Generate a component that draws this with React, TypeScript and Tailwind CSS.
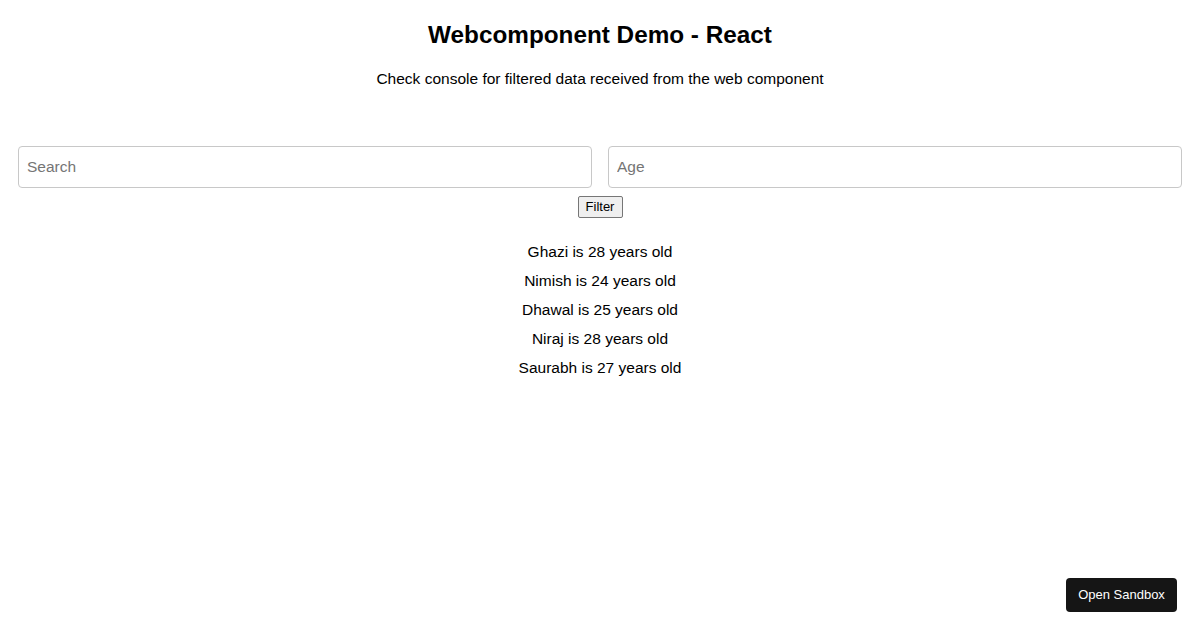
const people = [
  { name: "Ghazi", age: 28 },
  { name: "Nimish", age: 24 },
  { name: "Dhawal", age: 25 },
  { name: "Niraj", age: 28 },
  { name: "Saurabh", age: 27 },
]

export default function App() {
  return (
    <div className="relative h-[630px] w-full bg-white text-black font-['Liberation_Sans',Arial,sans-serif]">
      <div className="pt-[21px] text-center">
        <h1 className="text-[24.3px] font-bold leading-[28px]">Webcomponent Demo - React</h1>
        <p className="mt-[21px] text-[15.5px] leading-[18px]">
          Check console for filtered data received from the web component
        </p>
      </div>

      <div className="mt-[58px] flex gap-4 px-[18px]">
        <input
          placeholder="Search"
          className="h-[42px] flex-1 rounded-[4px] border border-[#c8c8c8] px-2 text-[15.5px] placeholder:text-[#757575] outline-none"
        />
        <input
          placeholder="Age"
          className="h-[42px] flex-1 rounded-[4px] border border-[#c8c8c8] px-2 text-[15.5px] placeholder:text-[#757575] outline-none"
        />
      </div>

      <div className="mt-[8px] flex justify-center">
        <button className="h-[22px] w-[45px] rounded-[2px] border border-[#767676] bg-[#efefef] text-[13px] leading-[18px] text-black">
          Filter
        </button>
      </div>

      <ul className="mt-[19px] text-center text-[15.5px] leading-[29px]">
        {people.map((p) => (
          <li key={p.name}>
            {p.name} is {p.age} years old
          </li>
        ))}
      </ul>

      <button className="absolute right-[23px] bottom-[18px] h-[34px] w-[111px] rounded-[4px] bg-[#151515] text-[13px] text-white font-['Liberation_Sans',Arial,sans-serif]">
        Open Sandbox
      </button>
    </div>
  )
}
